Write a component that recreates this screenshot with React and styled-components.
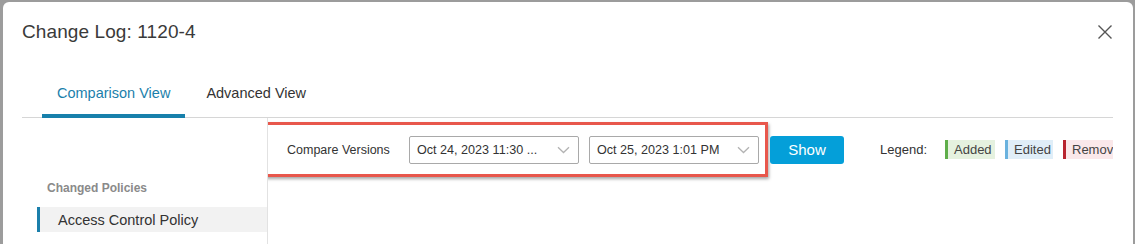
import React from 'react';
import styled, { createGlobalStyle } from 'styled-components';

const GlobalStyle = createGlobalStyle`
  html, body {
    margin: 0;
    padding: 0;
    background: #9c9c9c;
    font-family: "Liberation Sans", Arial, sans-serif;
    overflow: hidden;
  }
`;

const Modal = styled.div`
  margin: 2px 2px 0 3px;
  height: 242px;
  background: #fff;
  border-radius: 6px 6px 0 0;
  overflow: hidden;
  display: flex;
  flex-direction: column;
`;

const Header = styled.div`
  height: 60px;
  padding: 0 20px 0 19px;
  display: flex;
  align-items: center;
  justify-content: space-between;
`;

const Title = styled.h1`
  margin: 0;
  font-size: 19px;
  font-weight: 400;
  color: #3a3a3a;
  letter-spacing: 0.1px;
`;

const CloseButton = styled.button`
  border: 0;
  background: none;
  padding: 0;
  width: 16px;
  height: 16px;
  display: flex;
  cursor: pointer;
`;

const TabBar = styled.div`
  margin: 0 20px 0 19px;
  padding-left: 20px;
  height: 55px;
  display: flex;
  align-items: flex-end;
  border-bottom: 1px solid #d6d6d6;
`;

const Tab = styled.div`
  padding: 0 15px 0 15px;
  height: 33px;
  margin-right: ${p => (p.$active ? '6px' : '0')};
  margin-bottom: -1px;
  font-size: 14.5px;
  color: ${p => (p.$active ? '#1b7fab' : '#333')};
  border-bottom: 4px solid ${p => (p.$active ? '#1780ab' : 'transparent')};
  box-sizing: border-box;
  display: flex;
  align-items: flex-start;
`;

const Body = styled.div`
  flex: 1;
  margin: 0 20px 0 19px;
  display: flex;
  overflow: hidden;
`;

const Sidebar = styled.div`
  width: 246px;
  flex-shrink: 0;
  padding: 63px 0 0 15px;
  box-sizing: border-box;
  border-right: 1px solid #e2e2e2;
`;

const SideHeading = styled.div`
  padding-left: 10px;
  font-size: 12px;
  font-weight: 700;
  color: #8a8a8a;
  height: 14px;
  line-height: 14px;
`;

const SideItem = styled.div`
  margin-top: 12px;
  height: 25px;
  display: flex;
  align-items: center;
  padding-left: 18px;
  background: #f2f2f2;
  border-left: 3px solid #1b7fab;
  font-size: 14.5px;
  color: #333;
`;

const Main = styled.div`
  flex: 1;
  min-width: 0;
  overflow: hidden;
`;

const Toolbar = styled.div`
  margin: 4px 0 0 -3px;
  display: flex;
  align-items: center;
  white-space: nowrap;
  & > * {
    flex-shrink: 0;
  }
`;

const Highlight = styled.div`
  height: 55px;
  box-sizing: border-box;
  border: 3px solid #e8574c;
  box-shadow: 1px 2px 3px rgba(0, 0, 0, 0.35);
  padding: 0 6px 0 19px;
  display: flex;
  align-items: center;
`;

const Label = styled.span`
  width: 122px;
  font-size: 12.5px;
  color: #333;
`;

const Select = styled.div`
  width: 170px;
  height: 28px;
  box-sizing: border-box;
  border: 1px solid #a9a9a9;
  border-radius: 2px;
  padding: 0 8px 0 7px;
  margin-right: ${p => p.$gap || 0}px;
  display: flex;
  align-items: center;
  justify-content: space-between;
  font-size: 12.6px;
  color: #333;
`;

const ShowButton = styled.button`
  margin-left: 2px;
  width: 74px;
  height: 28px;
  border: 0;
  border-radius: 3px;
  background: #049fd9;
  color: #fff;
  font-family: inherit;
  font-size: 15px;
`;

const Legend = styled.div`
  margin-left: 36px;
  display: flex;
  align-items: center;
  font-size: 13px;
  color: #333;
`;

const LegendLabel = styled.span`
  width: 65px;
`;

const LegendItem = styled.span`
  height: 19px;
  width: ${p => p.$w}px;
  box-sizing: border-box;
  margin-right: 10px;
  padding-left: 6px;
  display: inline-flex;
  align-items: center;
  background: ${p => p.$bg};
  border-left: 3px solid ${p => p.$bar};
  font-size: 13px;
  color: #444;
  flex-shrink: 0;
`;

const Chevron = () => (
  <svg width="13" height="8" viewBox="0 0 13 8" fill="none">
    <path d="M1 1.2 6.5 6.5 12 1.2" stroke="#b3b3b3" strokeWidth="1.3" />
  </svg>
);

export default function App() {
  return (
    <>
      <GlobalStyle />
      <Modal>
        <Header>
          <Title>Change Log: 1120-4</Title>
          <CloseButton aria-label="Close">
            <svg width="16" height="16" viewBox="0 0 16 16">
              <path d="M1.5 1.5 14.5 14.5M14.5 1.5 1.5 14.5" stroke="#555" strokeWidth="1.4" />
            </svg>
          </CloseButton>
        </Header>
        <TabBar>
          <Tab $active>Comparison View</Tab>
          <Tab>Advanced View</Tab>
        </TabBar>
        <Body>
          <Sidebar>
            <SideHeading>Changed Policies</SideHeading>
            <SideItem>Access Control Policy</SideItem>
          </Sidebar>
          <Main>
            <Toolbar>
              <Highlight>
                <Label>Compare Versions</Label>
                <Select $gap={10}>
                  <span>Oct 24, 2023 11:30 ...</span>
                  <Chevron />
                </Select>
                <Select>
                  <span>Oct 25, 2023 1:01 PM</span>
                  <Chevron />
                </Select>
              </Highlight>
              <ShowButton>Show</ShowButton>
              <Legend>
                <LegendLabel>Legend:</LegendLabel>
                <LegendItem $w={50} $bg="#e5f1df" $bar="#5fae4a">Added</LegendItem>
                <LegendItem $w={48} $bg="#e0eef8" $bar="#6ab2de">Edited</LegendItem>
                <LegendItem $w={60} $bg="#fae8ea" $bar="#b8242f">Removed</LegendItem>
              </Legend>
            </Toolbar>
          </Main>
        </Body>
      </Modal>
    </>
  );
}
